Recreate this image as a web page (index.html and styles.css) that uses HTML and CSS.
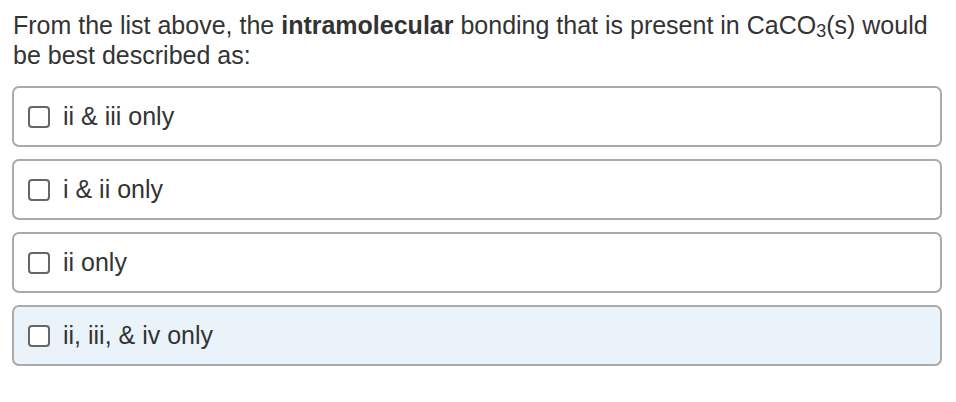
FILE: index.html
```html
<!DOCTYPE html>
<html>
<head>
<meta charset="utf-8">
<link rel="stylesheet" href="styles.css">
</head>
<body>
<div class="question">
  <p class="prompt">From the list above, the <b>intramolecular</b> bonding that is present in CaCO<sub>3</sub>(s) would be best described as:</p>
  <div class="options">
    <label class="option"><span class="box"></span><span class="label">ii &amp; iii only</span></label>
    <label class="option"><span class="box"></span><span class="label">i &amp; ii only</span></label>
    <label class="option"><span class="box"></span><span class="label">ii only</span></label>
    <label class="option hover"><span class="box"></span><span class="label">ii, iii, &amp; iv only</span></label>
  </div>
</div>
</body>
</html>
```
FILE: styles.css
```css
html, body {
  margin: 0;
  padding: 0;
  background: #fff;
}
body {
  font-family: "Liberation Sans", Arial, sans-serif;
  color: #333;
}
.question {
  padding: 10px 14px 0 12px;
}
.prompt {
  margin: 0 0 0 1px;
  font-size: 25px;
  line-height: 30px;
}
.prompt b {
  font-weight: bold;
}
.prompt sub {
  font-size: 18px;
  vertical-align: -3px;
  line-height: 0;
}
.options {
  margin-top: 16px;
  display: flex;
  flex-direction: column;
  gap: 12px;
}
.option {
  display: flex;
  align-items: center;
  gap: 13px;
  height: 57px;
  padding: 0 14px;
  border: 2px solid #aaa;
  border-radius: 7px;
  background: #fff;
}
.option.hover {
  background: #ebf3fa;
}
.box {
  width: 18px;
  height: 18px;
  border: 2px solid #666;
  border-radius: 4px;
  background: #fff;
  flex: none;
}
.label {
  font-size: 25px;
}
```
